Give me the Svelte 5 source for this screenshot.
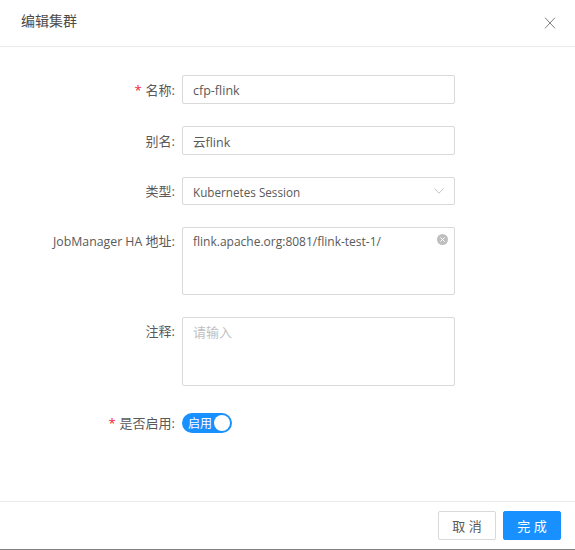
<script>
	let name = $state('cfp-flink');
	let alias = $state('云flink');
	let address = $state('flink.apache.org:8081/flink-test-1/');
	let note = $state('');
	let enabled = $state(true);
</script>

<div class="modal">
	<header>
		<h3>编辑集群</h3>
		<button class="close" aria-label="关闭">
			<svg width="12" height="12" viewBox="0 0 12 12">
				<path d="M1 .7l10 10.6M11 .7L1 11.3" fill="none" stroke="#808080" stroke-width="1" />
			</svg>
		</button>
	</header>

	<form class="body">
		<div class="row">
			<label for="name"><i>*</i>名称:</label>
			<input id="name" bind:value={name} />
		</div>
		<div class="row">
			<label for="alias">别名:</label>
			<input id="alias" bind:value={alias} />
		</div>
		<div class="row">
			<span class="label">类型:</span>
			<div class="select">
				<span>Kubernetes Session</span>
				<svg width="10" height="6" viewBox="0 0 10 6">
					<path d="M.5.5L5 5.2 9.5.5" fill="none" stroke="#c4c4c4" stroke-width="1" />
				</svg>
			</div>
		</div>
		<div class="row top">
			<label for="address"><span class="latin">JobManager HA</span> 地址:</label>
			<div class="area">
				<textarea id="address" bind:value={address}></textarea>
				<span class="clear">
					<svg width="5" height="5" viewBox="0 0 5 5">
						<path d="M.5.5l4 4M4.5.5l-4 4" fill="none" stroke="#fff" stroke-width="1" />
					</svg>
				</span>
			</div>
		</div>
		<div class="row top">
			<label for="note">注释:</label>
			<div class="area note">
				<textarea id="note" placeholder="请输入" bind:value={note}></textarea>
			</div>
		</div>
		<div class="row switch-row">
			<span class="label"><i>*</i>是否启用:</span>
			<button type="button" class="switch" onclick={() => (enabled = !enabled)}>
				<span>启用</span>
				<b></b>
			</button>
		</div>
	</form>

	<footer>
		<button class="btn">取 消</button>
		<button class="btn primary">完 成</button>
	</footer>
</div>

<style>
	:global(body) {
		margin: 0;
		background: #fff;
	}

	.modal {
		width: 575px;
		height: 550px;
		box-sizing: border-box;
		display: flex;
		flex-direction: column;
		border-bottom: 1px solid #808080;
		font-family: 'Open Sans', 'Noto Sans CJK SC', sans-serif;
		font-size: 13px;
		color: #595959;
	}

	header {
		height: 47px;
		box-sizing: border-box;
		flex: none;
		display: flex;
		align-items: center;
		justify-content: space-between;
		padding: 0 19px 5px 21px;
		border-bottom: 1px solid #ebebeb;
	}

	h3 {
		margin: 0 0 2px;
		font-size: 14px;
		font-weight: 400;
		color: #4a4a4a;
	}

	.close {
		display: flex;
		padding: 0;
		margin-top: 5px;
		border: none;
		background: none;
	}

	.body {
		flex: 1;
		display: flex;
		flex-direction: column;
		gap: 22px;
		padding-top: 28px;
	}

	.row {
		display: flex;
		align-items: center;
		gap: 7px;
	}

	.row.top {
		align-items: flex-start;
	}

	label,
	.label {
		width: 175px;
		flex: none;
		text-align: right;
		color: #595959;
		line-height: 28px;
	}

	.latin {
		font-size: 12.3px;
	}

	i {
		font-style: normal;
		color: #f5222d;
		margin-right: 4px;
		font-size: 13px;
	}

	input,
	textarea,
	.select {
		width: 273px;
		box-sizing: border-box;
		border: 1px solid #d9d9d9;
		border-radius: 2px;
		background: #fff;
		font: inherit;
		color: #595959;
		outline: none;
		padding: 0 10px;
	}

	input {
		height: 29px;
		padding-top: 1px;
		font-size: 12.5px;
	}

	.select {
		height: 28px;
		display: flex;
		align-items: center;
		justify-content: space-between;
		font-size: 11.7px;
	}

	.select span {
		margin-top: 2px;
	}

	.area {
		position: relative;
		display: flex;
		height: 68px;
	}

	.area.note {
		height: 69px;
	}

	textarea {
		height: 100%;
		padding: 4px 10px;
		resize: none;
		line-height: 20px;
		font-size: 12px;
	}

	.note textarea {
		font-size: 13px;
	}

	textarea::placeholder {
		color: #bfbfbf;
	}

	.clear {
		position: absolute;
		top: 7px;
		right: 7px;
		width: 11px;
		height: 11px;
		border-radius: 50%;
		background: #bfbfbf;
		display: flex;
		align-items: center;
		justify-content: center;
	}

	.switch-row {
		margin-top: 5px;
	}

	.switch-row .label {
		line-height: 20px;
	}

	.switch {
		width: 50px;
		height: 20px;
		padding: 0 2px 0 6px;
		border: none;
		border-radius: 10px;
		background: #1890ff;
		color: #fff;
		font: inherit;
		font-size: 12px;
		display: flex;
		align-items: center;
		justify-content: space-between;
	}

	.switch b {
		width: 16px;
		height: 16px;
		border-radius: 50%;
		background: #fff;
	}

	footer {
		height: 38px;
		flex: none;
		display: flex;
		justify-content: flex-end;
		align-items: flex-start;
		gap: 7px;
		padding: 9px 14px 0 0;
		border-top: 1px solid #ebebeb;
	}

	.btn {
		width: 58px;
		height: 29px;
		padding: 0;
		border: 1px solid #d9d9d9;
		border-radius: 2px;
		background: #fff;
		font: inherit;
		color: #595959;
	}

	.btn.primary {
		border-color: #1890ff;
		background: #1890ff;
		color: #fff;
	}
</style>
